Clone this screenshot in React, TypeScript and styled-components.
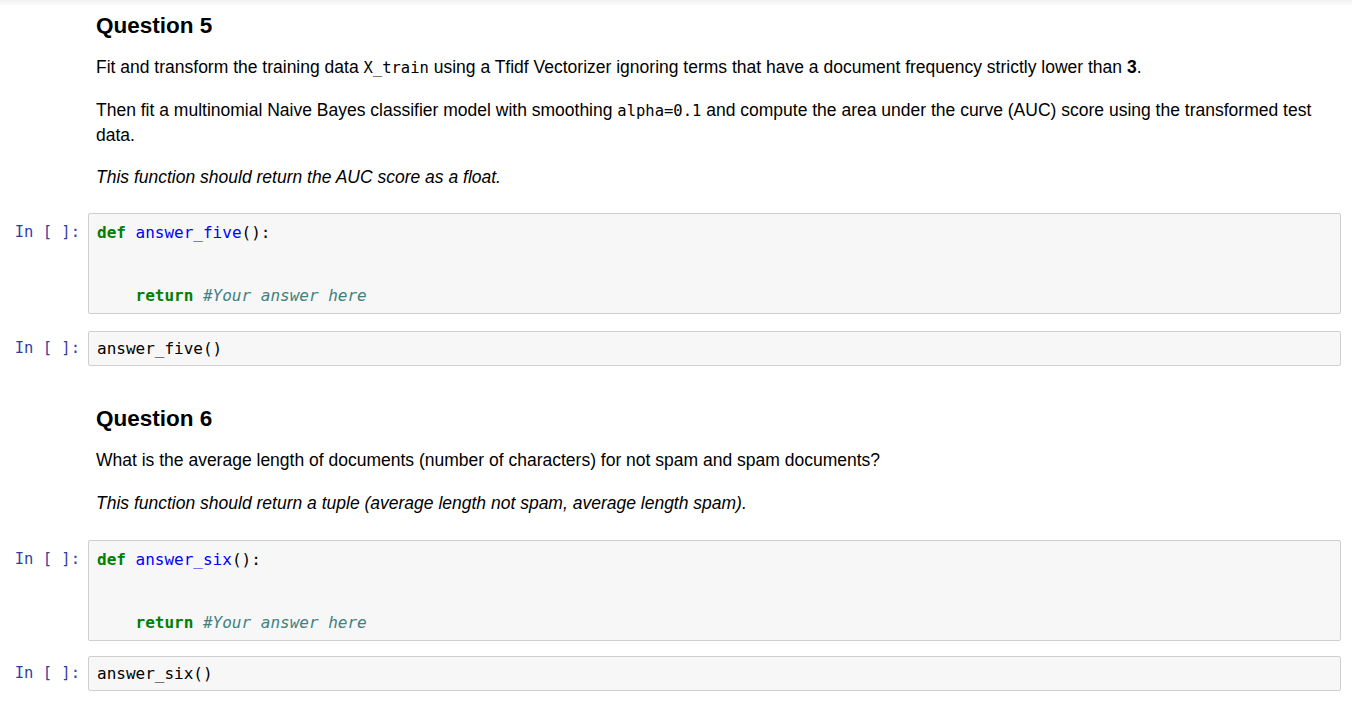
import React from "react";
import styled, { createGlobalStyle } from "styled-components";

const GlobalStyle = createGlobalStyle`
  html, body {
    margin: 0;
    padding: 0;
    background: #ffffff;
  }
  body {
    font-family: "Liberation Sans", Arial, sans-serif;
    font-size: 17.5px;
    line-height: 25px;
    color: #000000;
  }
`;

const TopShadow = styled.div`
  position: fixed;
  top: 0;
  left: 0;
  right: 0;
  height: 6px;
  background: linear-gradient(rgba(0, 0, 0, 0.055), rgba(0, 0, 0, 0));
  pointer-events: none;
`;

const Notebook = styled.main`
  display: flex;
  flex-direction: column;
  padding: 15px 11px 0 0;
`;

const Row = styled.section<{ $top?: number }>`
  display: flex;
  align-items: flex-start;
  margin-top: ${(p) => p.$top ?? 0}px;
`;

const Prompt = styled.div<{ $pad?: number }>`
  flex: 0 0 88px;
  box-sizing: border-box;
  padding: ${(p) => (p.$pad ?? 0) + 1}px 8px 0 0;
  text-align: right;
  font-family: "DejaVu Sans Mono", "Liberation Mono", monospace;
  font-size: 15.5px;
  line-height: 21px;
  color: #303f9f;
  white-space: pre;
`;

const Markdown = styled.div`
  flex: 1;
  padding-left: 8px;
`;

const Heading = styled.h2`
  margin: 0;
  font-size: 22.5px;
  line-height: 22.5px;
  font-weight: bold;
`;

const Para = styled.p<{ $italic?: boolean }>`
  margin: 17.5px 0 0 0;
  font-style: ${(p) => (p.$italic ? "italic" : "normal")};
`;

const InlineCode = styled.code`
  font-family: "DejaVu Sans Mono", "Liberation Mono", monospace;
  font-size: 15.5px;
  line-height: 1;
`;

const InputArea = styled.div<{ $padTop: number; $padBottom: number }>`
  flex: 1;
  background: #f7f7f7;
  border: 1px solid #cfcfcf;
  border-radius: 2px;
  padding: ${(p) => p.$padTop}px 8px ${(p) => p.$padBottom}px 8px;
`;

const Code = styled.pre`
  margin: 0;
  font-family: "DejaVu Sans Mono", "Liberation Mono", monospace;
  font-size: 16px;
  line-height: 21px;
  color: #000000;
  white-space: pre;
`;

const Keyword = styled.span`
  color: #008000;
  font-weight: bold;
`;

const Def = styled.span`
  color: #0000ff;
`;

const Comment = styled.span`
  color: #408080;
  font-style: italic;
`;

const Strong = styled.b`
  font-weight: bold;
`;

function FuncCell({ name, top }: { name: string; top: number }) {
  return (
    <Row $top={top}>
      <Prompt $pad={8}>In [ ]:</Prompt>
      <InputArea $padTop={8} $padBottom={7}>
        <Code>
          <Keyword>def</Keyword> <Def>{name}</Def>():{"\n"}
          {"\n"}
          {"\n"}
          {"    "}
          <Keyword>return</Keyword> <Comment>#Your answer here</Comment>
        </Code>
      </InputArea>
    </Row>
  );
}

function CallCell({ name, top }: { name: string; top: number }) {
  return (
    <Row $top={top}>
      <Prompt $pad={6}>In [ ]:</Prompt>
      <InputArea $padTop={6} $padBottom={6}>
        <Code>{name}()</Code>
      </InputArea>
    </Row>
  );
}

export default function App() {
  return (
    <>
      <GlobalStyle />
      <TopShadow />
      <Notebook>
        <Row>
          <Prompt />
          <Markdown>
            <Heading>Question 5</Heading>
            <Para>
              Fit and transform the training data <InlineCode>X_train</InlineCode> using a Tfidf
              Vectorizer ignoring terms that have a document frequency strictly lower than{" "}
              <Strong>3</Strong>.
            </Para>
            <Para>
              Then fit a multinomial Naive Bayes classifier model with smoothing{" "}
              <InlineCode>alpha=0.1</InlineCode> and compute the area under the curve (AUC) score
              using the transformed test data.
            </Para>
            <Para $italic>This function should return the AUC score as a float.</Para>
          </Markdown>
        </Row>
        <FuncCell name="answer_five" top={23} />
        <CallCell name="answer_five" top={17} />
        <Row $top={42}>
          <Prompt />
          <Markdown>
            <Heading>Question 6</Heading>
            <Para>
              What is the average length of documents (number of characters) for not spam and spam
              documents?
            </Para>
            <Para $italic>
              This function should return a tuple (average length not spam, average length spam).
            </Para>
          </Markdown>
        </Row>
        <FuncCell name="answer_six" top={24} />
        <CallCell name="answer_six" top={15} />
      </Notebook>
    </>
  );
}
